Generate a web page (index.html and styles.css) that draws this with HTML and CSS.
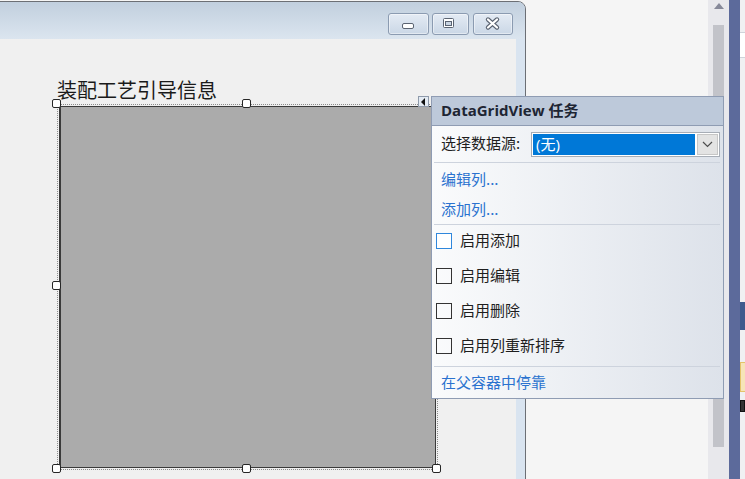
FILE: index.html
```html
<!DOCTYPE html>
<html lang="zh-CN">
<head>
<meta charset="utf-8">
<title>Designer</title>
<link rel="stylesheet" href="styles.css">
</head>
<body>
<div class="ide">
  <div class="canvas">
    <div class="form-window">
      <div class="titlebar">
        <div class="caption-buttons">
          <div class="cap-btn btn-min">
            <svg width="41" height="22" viewBox="0 0 41 22"><rect x="14.5" y="10.5" width="11" height="5" rx="1.5" fill="#fff" stroke="#5b6472"/></svg>
          </div>
          <div class="cap-btn btn-max">
            <svg width="37" height="22" viewBox="0 0 37 22"><rect x="11.5" y="5.5" width="10" height="9" rx="1" fill="#fff" stroke="#5b6472"/><rect x="13.5" y="8.5" width="6" height="4" fill="#c9d5e3" stroke="#5b6472"/></svg>
          </div>
          <div class="cap-btn btn-close">
            <svg width="40" height="22" viewBox="0 0 40 22"><path d="M15 6.5 L24 14.5 M24 6.5 L15 14.5" stroke="#5b6472" stroke-width="4.4" stroke-linecap="round"/><path d="M15 6.5 L24 14.5 M24 6.5 L15 14.5" stroke="#fff" stroke-width="2.2" stroke-linecap="round"/></svg>
          </div>
        </div>
      </div>
      <div class="client">
        <div class="form-label">装配工艺引导信息</div>
        <div class="selection">
          <div class="grid"></div>
          <span class="handle hx0 hy0"></span>
          <span class="handle hx1 hy0"></span>
          <span class="handle hx2 hy0"></span>
          <span class="handle hx0 hy1"></span>
          <span class="handle hx2 hy1"></span>
          <span class="handle hx0 hy2"></span>
          <span class="handle hx1 hy2"></span>
          <span class="handle hx2 hy2"></span>
        </div>
        <div class="smart-tag"><span class="tag-arrow"></span></div>
      </div>
    </div>
  </div>
  <div class="vscroll">
    <div class="arrow-up"></div>
    <div class="thumb"></div>
  </div>
  <div class="splitter"></div>
  <div class="side-pane">
    <div class="sp-white"></div>
    <div class="sp-blue"></div>
    <div class="sp-tan"></div>
    <div class="sp-dark"></div>
  </div>

  <div class="task-panel">
    <div class="tp-header">DataGridView 任务</div>
    <div class="tp-body">
      <div class="ds-row">
        <span class="tp-label">选择数据源:</span>
        <div class="combo">
          <div class="combo-field">(无)</div>
          <div class="combo-btn">
            <svg width="11" height="7" viewBox="0 0 11 7"><path d="M1 1 L5.5 5.5 L10 1" fill="none" stroke="#4d4d4d" stroke-width="1.2"/></svg>
          </div>
        </div>
      </div>
      <div class="tp-sep"></div>
      <div class="link-group">
        <div class="tp-link">编辑列...</div>
        <div class="tp-link">添加列...</div>
      </div>
      <div class="tp-sep"></div>
      <div class="check-group">
        <div class="check-row"><span class="checkbox focus"></span><span class="tp-label">启用添加</span></div>
        <div class="check-row"><span class="checkbox"></span><span class="tp-label">启用编辑</span></div>
        <div class="check-row"><span class="checkbox"></span><span class="tp-label">启用删除</span></div>
        <div class="check-row"><span class="checkbox"></span><span class="tp-label">启用列重新排序</span></div>
      </div>
      <div class="tp-sep"></div>
      <div class="tp-link dock">在父容器中停靠</div>
    </div>
  </div>
</div>
</body>
</html>
```

FILE: styles.css
```css
* { box-sizing: border-box; }

html, body {
  margin: 0;
  padding: 0;
}

body {
  width: 745px;
  height: 479px;
  overflow: hidden;
  background: #f5f5f5;
  font-family: "Open Sans", "Noto Sans CJK SC", sans-serif;
  color: #1e1e1e;
}

.ide {
  position: relative;
  display: flex;
  width: 745px;
  height: 479px;
}

/* ---------- designer canvas ---------- */
.canvas {
  position: relative;
  flex: 1;
  background: #f5f5f5;
  overflow: hidden;
}

.form-window {
  position: absolute;
  left: -9px;
  top: 1px;
  width: 535px;
  height: 620px;
  display: flex;
  flex-direction: column;
  border: 1px solid #6c6f75;
  border-radius: 0 8px 0 0;
  background: #d9e4f0;
}

.titlebar {
  height: 37px;
  flex: none;
  display: flex;
  justify-content: flex-end;
  align-items: flex-start;
  padding: 11px 12px 0 0;
  border-radius: 0 7px 0 0;
  background: linear-gradient(#c1cfde, #dbe5ef);
}

.caption-buttons {
  display: flex;
  gap: 3px;
}

.cap-btn {
  height: 22px;
  display: flex;
  border: 1px solid #8b9bb1;
  border-radius: 3px;
  background: linear-gradient(#e4ebf4, #cad7e6);
  box-shadow: inset 0 0 0 1px rgba(255,255,255,0.45);
  overflow: hidden;
}
.cap-btn svg { display: block; margin: -1px; }
.btn-min { width: 41px; }
.btn-max { width: 37px; }
.btn-close { width: 40px; margin-left: 1px; }

.client {
  position: relative;
  flex: 1;
  margin: 0 9px 0 8px;
  background: #f0f0f0;
}

.form-label {
  position: absolute;
  left: 57px;
  top: 39px;
  font-family: "Noto Sans CJK SC", sans-serif;
  font-size: 20px;
  line-height: 24px;
  color: #1a1a1a;
  white-space: nowrap;
}

.selection {
  position: absolute;
  left: 57px;
  top: 65px;
  width: 381px;
  height: 366px;
  border: 1px dotted #8c8c8c;
}

.grid {
  position: absolute;
  left: 1px;
  top: 1px;
  right: 1px;
  bottom: 1px;
  background: #ababab;
  border: 1px solid #3a3a3a;
  border-left-width: 2px;
}

.handle {
  position: absolute;
  width: 9px;
  height: 9px;
  background: #fff;
  border: 1.6px solid #262626;
  border-radius: 2px;
}
.hx0 { left: -6px; }
.hx1 { left: 184px; }
.hx2 { left: 374px; }
.hy0 { top: -6px; }
.hy1 { top: 176px; }
.hy2 { top: 359px; }

.smart-tag {
  position: absolute;
  left: 418px;
  top: 57px;
  width: 11px;
  height: 11px;
  display: flex;
  align-items: center;
  justify-content: center;
  background: #e4ebf3;
  border: 1px solid #8e9aab;
}
.tag-arrow {
  width: 0;
  height: 0;
  border-top: 4px solid transparent;
  border-bottom: 4px solid transparent;
  border-right: 4px solid #111;
  margin-left: -1px;
}

/* ---------- scrollbar + side ---------- */
.vscroll {
  width: 21px;
  flex: none;
  background: #e8e8ec;
  display: flex;
  flex-direction: column;
  align-items: center;
}
.arrow-up {
  margin-top: 3px;
  width: 0;
  height: 0;
  border-left: 5.5px solid transparent;
  border-right: 5.5px solid transparent;
  border-bottom: 6px solid #868999;
}
.thumb {
  margin-top: 16px;
  width: 11px;
  height: 422px;
  background: #c2c3c9;
}

.splitter {
  width: 11px;
  flex: none;
  background: #5c6a9b;
}

.side-pane {
  width: 5px;
  flex: none;
  background: #f0f0f2;
  display: flex;
  flex-direction: column;
}
.sp-white {
  margin-top: 32px;
  height: 26px;
  background: #fff;
  border-top: 1px solid #cfd3da;
  border-bottom: 1px solid #cfd3da;
}
.sp-blue {
  margin-top: 244px;
  height: 28px;
  background: #3e5a8d;
}
.sp-tan {
  margin-top: 32px;
  height: 30px;
  background: #f6e4b8;
  border: 1px solid #e4c36a;
  border-right: none;
}
.sp-dark {
  margin-top: 8px;
  height: 12px;
  background: #333;
  border: 1px solid #111;
}

/* ---------- smart tag task panel ---------- */
.task-panel {
  position: absolute;
  left: 431px;
  top: 96px;
  width: 293px;
  border: 1px solid #8f9cb3;
  background: #f4f6f9;
  font-size: 15px;
}

.tp-header {
  height: 29px;
  padding-left: 9px;
  line-height: 27px;
  border-bottom: 1px solid #8f9cb3;
  background: #bdc9da;
  font-size: 15px;
  font-weight: 700;
  color: #1d2533;
  white-space: nowrap;
}

.tp-body {
  background: linear-gradient(to right, #fafbfc, #dde2ea);
}

.tp-label {
  font-family: "Noto Sans CJK SC", sans-serif;
  font-size: 15px;
  line-height: 20px;
  padding-bottom: 2px;
  color: #1e1e1e;
  white-space: nowrap;
}

.ds-row {
  height: 36px;
  display: flex;
  align-items: center;
  padding: 0 3px 0 9px;
}

.combo {
  margin-left: auto;
  width: 189px;
  height: 25px;
  display: flex;
  padding: 1px;
  border: 1px solid #a7adb6;
  background: #fff;
}
.combo-field {
  flex: 1;
  background: #0078d7;
  color: #fff;
  font-size: 15px;
  line-height: 20px;
  padding-left: 3px;
  font-family: "Open Sans", "Noto Sans CJK SC", sans-serif;
}
.combo-btn {
  width: 21px;
  margin-left: 2px;
  display: flex;
  align-items: center;
  justify-content: center;
  background: #e3e3e3;
  border: 1px solid #c6c6c6;
}

.tp-sep {
  height: 1px;
  margin: 0 3px 0 2px;
  background: #cdd3dd;
}

.link-group {
  padding-top: 1px;
}

.tp-link {
  height: 30px;
  display: flex;
  align-items: center;
  padding: 0 0 2px 9px;
  font-family: "Noto Sans CJK SC", sans-serif;
  font-size: 15px;
  color: #2a72cf;
  white-space: nowrap;
}
.tp-link.dock {
  height: 31px;
}

.check-group {
  display: flex;
  flex-direction: column;
  gap: 4px;
  padding-bottom: 5px;
}

.check-row {
  height: 31px;
  display: flex;
  align-items: center;
  gap: 8px;
  padding-left: 4px;
}

.checkbox {
  width: 16px;
  height: 16px;
  flex: none;
  border: 1px solid #333;
  background: transparent;
}
.checkbox.focus {
  border-color: #2f87dc;
  background: #fff;
}
```
